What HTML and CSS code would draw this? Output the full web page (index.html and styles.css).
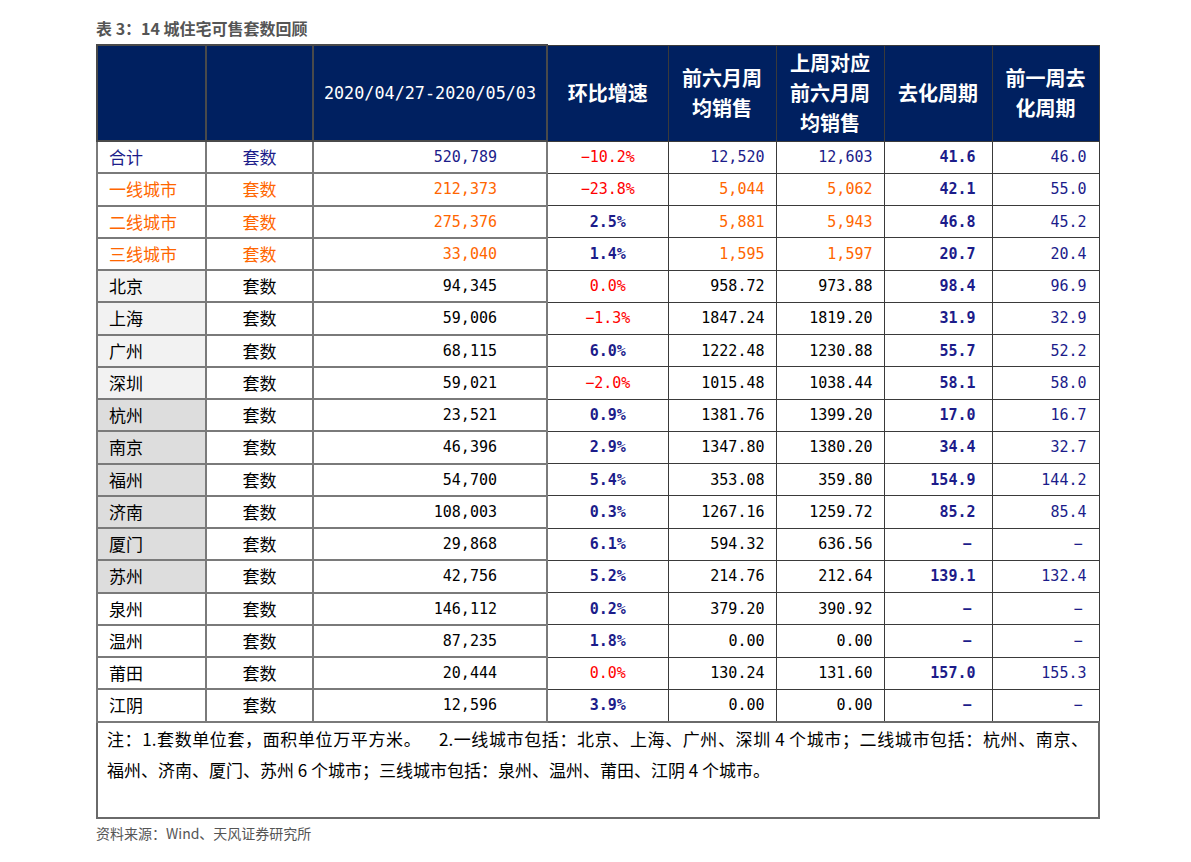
FILE: index.html
```html
<!DOCTYPE html>
<html lang="zh-CN">
<head>
<meta charset="utf-8">
<title>表 3：14 城住宅可售套数回顾</title>
<link rel="stylesheet" href="styles.css">
</head>
<body>
<div class="page">
  <div class="title">表 3：14 城住宅可售套数回顾</div>
  <table class="grid">
    <colgroup>
      <col class="c1"><col class="c2"><col class="c3"><col class="c4"><col class="c5"><col class="c6"><col class="c7"><col class="c8">
    </colgroup>
    <thead>
      <tr class="head">
        <th class="k"></th>
        <th class="k"></th>
        <th class="k date">2020/04/27-2020/05/03</th>
        <th>环比增速</th>
        <th>前六月周<br>均销售</th>
        <th>上周对应<br>前六月周<br>均销售</th>
        <th>去化周期</th>
        <th>前一周去<br>化周期</th>
      </tr>
    </thead>
    <tbody>
      <tr class="row navy">
        <td class="k name">合计</td><td class="k unit">套数</td><td class="k num n3">520,789</td>
        <td class="pct neg">−10.2%</td><td class="num">12,520</td><td class="num">12,603</td><td class="num bold">41.6</td><td class="num prev">46.0</td>
      </tr>
      <tr class="row orange">
        <td class="k name">一线城市</td><td class="k unit">套数</td><td class="k num n3">212,373</td>
        <td class="pct neg">−23.8%</td><td class="num">5,044</td><td class="num">5,062</td><td class="num bold">42.1</td><td class="num prev">55.0</td>
      </tr>
      <tr class="row orange">
        <td class="k name">二线城市</td><td class="k unit">套数</td><td class="k num n3">275,376</td>
        <td class="pct pos">2.5%</td><td class="num">5,881</td><td class="num">5,943</td><td class="num bold">46.8</td><td class="num prev">45.2</td>
      </tr>
      <tr class="row orange">
        <td class="k name">三线城市</td><td class="k unit">套数</td><td class="k num n3">33,040</td>
        <td class="pct pos">1.4%</td><td class="num">1,595</td><td class="num">1,597</td><td class="num bold">20.7</td><td class="num prev">20.4</td>
      </tr>
      <tr class="row">
        <td class="k name t1">北京</td><td class="k unit">套数</td><td class="k num n3">94,345</td>
        <td class="pct neg">0.0%</td><td class="num">958.72</td><td class="num">973.88</td><td class="num bold">98.4</td><td class="num prev">96.9</td>
      </tr>
      <tr class="row">
        <td class="k name t1">上海</td><td class="k unit">套数</td><td class="k num n3">59,006</td>
        <td class="pct neg">−1.3%</td><td class="num">1847.24</td><td class="num">1819.20</td><td class="num bold">31.9</td><td class="num prev">32.9</td>
      </tr>
      <tr class="row">
        <td class="k name t1">广州</td><td class="k unit">套数</td><td class="k num n3">68,115</td>
        <td class="pct pos">6.0%</td><td class="num">1222.48</td><td class="num">1230.88</td><td class="num bold">55.7</td><td class="num prev">52.2</td>
      </tr>
      <tr class="row">
        <td class="k name t1">深圳</td><td class="k unit">套数</td><td class="k num n3">59,021</td>
        <td class="pct neg">−2.0%</td><td class="num">1015.48</td><td class="num">1038.44</td><td class="num bold">58.1</td><td class="num prev">58.0</td>
      </tr>
      <tr class="row">
        <td class="k name t2">杭州</td><td class="k unit">套数</td><td class="k num n3">23,521</td>
        <td class="pct pos">0.9%</td><td class="num">1381.76</td><td class="num">1399.20</td><td class="num bold">17.0</td><td class="num prev">16.7</td>
      </tr>
      <tr class="row">
        <td class="k name t2">南京</td><td class="k unit">套数</td><td class="k num n3">46,396</td>
        <td class="pct pos">2.9%</td><td class="num">1347.80</td><td class="num">1380.20</td><td class="num bold">34.4</td><td class="num prev">32.7</td>
      </tr>
      <tr class="row">
        <td class="k name t2">福州</td><td class="k unit">套数</td><td class="k num n3">54,700</td>
        <td class="pct pos">5.4%</td><td class="num">353.08</td><td class="num">359.80</td><td class="num bold">154.9</td><td class="num prev">144.2</td>
      </tr>
      <tr class="row">
        <td class="k name t2">济南</td><td class="k unit">套数</td><td class="k num n3">108,003</td>
        <td class="pct pos">0.3%</td><td class="num">1267.16</td><td class="num">1259.72</td><td class="num bold">85.2</td><td class="num prev">85.4</td>
      </tr>
      <tr class="row">
        <td class="k name t2">厦门</td><td class="k unit">套数</td><td class="k num n3">29,868</td>
        <td class="pct pos">6.1%</td><td class="num">594.32</td><td class="num">636.56</td><td class="num bold"><span class="dash">−</span></td><td class="num prev"><span class="dash">−</span></td>
      </tr>
      <tr class="row">
        <td class="k name t2">苏州</td><td class="k unit">套数</td><td class="k num n3">42,756</td>
        <td class="pct pos">5.2%</td><td class="num">214.76</td><td class="num">212.64</td><td class="num bold">139.1</td><td class="num prev">132.4</td>
      </tr>
      <tr class="row">
        <td class="k name">泉州</td><td class="k unit">套数</td><td class="k num n3">146,112</td>
        <td class="pct pos">0.2%</td><td class="num">379.20</td><td class="num">390.92</td><td class="num bold"><span class="dash">−</span></td><td class="num prev"><span class="dash">−</span></td>
      </tr>
      <tr class="row">
        <td class="k name">温州</td><td class="k unit">套数</td><td class="k num n3">87,235</td>
        <td class="pct pos">1.8%</td><td class="num">0.00</td><td class="num">0.00</td><td class="num bold"><span class="dash">−</span></td><td class="num prev"><span class="dash">−</span></td>
      </tr>
      <tr class="row">
        <td class="k name">莆田</td><td class="k unit">套数</td><td class="k num n3">20,444</td>
        <td class="pct neg">0.0%</td><td class="num">130.24</td><td class="num">131.60</td><td class="num bold">157.0</td><td class="num prev">155.3</td>
      </tr>
      <tr class="row">
        <td class="k name">江阴</td><td class="k unit">套数</td><td class="k num n3">12,596</td>
        <td class="pct pos">3.9%</td><td class="num">0.00</td><td class="num">0.00</td><td class="num bold"><span class="dash">−</span></td><td class="num prev"><span class="dash">−</span></td>
      </tr>
      <tr class="note-row">
        <td colspan="8" class="note">
          <div class="note-line first">注：1.套数单位套，面积单位万平方米。&nbsp;&nbsp;&nbsp; 2.一线城市包括：北京、上海、广州、深圳 4 个城市；二线城市包括：杭州、南京、</div>
          <div class="note-line">福州、济南、厦门、苏州 6 个城市；三线城市包括：泉州、温州、莆田、江阴 4 个城市。</div>
        </td>
      </tr>
    </tbody>
  </table>
  <div class="source">资料来源：Wind、天风证券研究所</div>
</div>
</body>
</html>
```

FILE: styles.css
```css
html, body {
  margin: 0;
  padding: 0;
  background: #ffffff;
}

body {
  font-family: "Noto Sans CJK SC", "Noto Sans", sans-serif;
  color: #000;
}

.page {
  padding: 16px 0 0 96px;
  width: 1002px;
}

.title {
  font-size: 16px;
  font-weight: bold;
  line-height: 24px;
  height: 24px;
  color: #555555;
  margin-bottom: 4px;
  white-space: nowrap;
}

.grid {
  border-collapse: collapse;
  table-layout: fixed;
  width: 1002px;
}

.c1 { width: 109px; }
.c2 { width: 107px; }
.c3 { width: 234px; }
.c4 { width: 121px; }
.c5 { width: 108px; }
.c6 { width: 108px; }
.c7 { width: 108px; }
.c8 { width: 107px; }

.grid th,
.grid td {
  border: 1px solid #3a3a3a;
  padding: 0;
}

.grid .k {
  border: 2px solid #7a7a7a;
}

.head {
  height: 96px;
}

.head th {
  background: #002060;
  color: #ffffff;
  font-size: 20px;
  font-weight: bold;
  line-height: 30px;
  text-align: center;
  vertical-align: middle;
  border-color: #3a3a3a;
}

.head th.k {
  border-color: #4a4a4a;
}

.head th.date {
  font-family: "DejaVu Sans Mono", monospace;
  font-size: 16.8px;
  font-weight: normal;
}

.row {
  height: 32.25px;
}

.row td {
  font-size: 15px;
  line-height: 20px;
  vertical-align: middle;
  white-space: nowrap;
  color: #000;
}

.row td.name {
  font-size: 17px;
  padding-left: 11px;
  text-align: left;
}

.row td.unit {
  font-size: 17px;
  text-align: center;
}

.row td.num {
  font-family: "DejaVu Sans Mono", monospace;
  text-align: right;
  padding-right: 11px;
}

.row td.n3 {
  padding-right: 49px;
}

.row td.bold {
  font-weight: bold;
  color: #1c1c8a;
  padding-right: 16px;
}

.row td.prev {
  color: #1c1c8a;
  padding-right: 12px;
}

.dash {
  padding-right: 4px;
}

.row td.pct {
  font-family: "DejaVu Sans Mono", monospace;
  text-align: center;
}

.row td.pct.pos {
  font-weight: bold;
  color: #1c1c8a;
}

.row td.pct.neg {
  color: #ff0000;
}

.row td.t1 {
  background: #f2f2f2;
}

.row td.t2 {
  background: #dddddd;
}

.navy td.name,
.navy td.unit,
.navy td.num {
  color: #1c1c8a;
}

.orange td.name,
.orange td.unit,
.orange td.num {
  color: #ff6600;
}

.orange td.bold,
.orange td.prev {
  color: #1c1c8a;
}

.note-row {
  height: 96px;
}

.grid td.note {
  vertical-align: top;
  padding: 0 10px 0 9px;
  font-size: 17px;
  line-height: 31px;
  color: #000;
  border: 2px solid #6a6a6a;
}

.note-line {
  white-space: nowrap;
}

.note-line.first {
  text-align: justify;
  text-align-last: justify;
  white-space: normal;
}

.source {
  margin-top: 4px;
  font-size: 14px;
  line-height: 20px;
  color: #555555;
  white-space: nowrap;
}
```
